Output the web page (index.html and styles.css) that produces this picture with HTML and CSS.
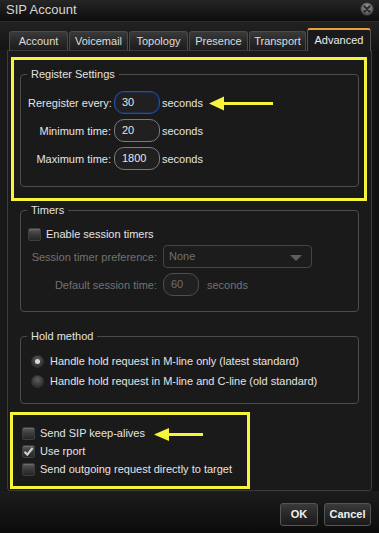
FILE: index.html
```html
<!DOCTYPE html>
<html>
<head>
<meta charset="utf-8">
<link rel="stylesheet" href="styles.css">
</head>
<body>
<div class="window">
  <div class="titlebar">
    <span class="title">SIP Account</span>
    <svg class="close" width="14" height="14" viewBox="0 0 14 14">
      <defs>
        <radialGradient id="cg" cx="50%" cy="35%" r="65%">
          <stop offset="0" stop-color="#9a9a9a"/>
          <stop offset="1" stop-color="#4a4a4a"/>
        </radialGradient>
      </defs>
      <circle cx="7" cy="7" r="6.5" fill="url(#cg)" stroke="#2a2a2a" stroke-width="0.8"/>
      <path d="M4.3 4.3 L9.7 9.7 M9.7 4.3 L4.3 9.7" stroke="#2b2b2b" stroke-width="2" stroke-linecap="round"/>
    </svg>
  </div>
  <div class="tabbar">
    <div class="tab">Account</div>
    <div class="tab">Voicemail</div>
    <div class="tab">Topology</div>
    <div class="tab">Presence</div>
    <div class="tab tab-narrow">Transport</div>
    <div class="tab tab-active">Advanced</div>
  </div>
  <div class="panel">
    <div class="hl hl-top">
      <fieldset class="group group-inset">
        <legend>Register Settings</legend>
        <div class="reg-grid">
          <span class="lbl">Reregister every:</span>
          <span class="field field-focus">30</span>
          <span class="unit">seconds</span>
          <span class="lbl">Minimum time:</span>
          <span class="field">20</span>
          <span class="unit">seconds</span>
          <span class="lbl">Maximum time:</span>
          <span class="field">1800</span>
          <span class="unit">seconds</span>
        </div>
      </fieldset>
    </div>

    <fieldset class="group group-timers">
      <legend>Timers</legend>
      <div class="timers-body">
        <div class="check-row"><span class="cb"></span><span>Enable session timers</span></div>
        <div class="timer-grid">
          <span class="lbl dim">Session timer preference:</span>
          <span class="select">None<span class="caret"></span></span>
          <span class="lbl dim">Default session time:</span>
          <span class="tline"><span class="field field-dim">60</span><span class="unit dim unit-wide">seconds</span></span>
        </div>
      </div>
    </fieldset>

    <fieldset class="group group-hold">
      <legend>Hold method</legend>
      <div class="hold-body">
        <div class="radio-row"><span class="rb rb-on"></span><span>Handle hold request in M-line only (latest standard)</span></div>
        <div class="radio-row"><span class="rb"></span><span>Handle hold request in M-line and C-line (old standard)</span></div>
      </div>
    </fieldset>

    <div class="hl hl-bottom">
      <div class="check-row"><span class="cb"></span><span>Send SIP keep-alives</span></div>
      <div class="check-row"><span class="cb cb-on"><svg width="13" height="13" viewBox="0 0 13 13"><path d="M2.5 6.8 L5.3 9.6 L10.6 3" fill="none" stroke="#cfcfcf" stroke-width="2.2"/></svg></span><span>Use rport</span></div>
      <div class="check-row"><span class="cb"></span><span>Send outgoing request directly to target</span></div>
    </div>
  </div>
  <div class="footer">
    <span class="btn btn-ok">OK</span>
    <span class="btn btn-cancel">Cancel</span>
  </div>
  <svg class="annot" width="379" height="533" viewBox="0 0 379 533">
    <polygon points="209,103.5 224,96.5 224,110.5" fill="#f6f53c"/>
    <rect x="222" y="102" width="51" height="3" fill="#f6f53c"/>
    <polygon points="154,434.5 169,428 169,441" fill="#f6f53c"/>
    <rect x="167" y="433" width="36" height="3" fill="#f6f53c"/>
  </svg>
</div>
</body>
</html>
```
FILE: styles.css
```css
* { box-sizing: border-box; }
html, body { margin: 0; padding: 0; background: #121212; }
body { font-family: "Liberation Sans", Arial, sans-serif; font-size: 11px; color: #e4e4e4; }

.window {
  position: relative;
  width: 379px;
  height: 533px;
  overflow: hidden;
  display: flex;
  flex-direction: column;
  background: linear-gradient(to right, #181818, #161616 95%, #111 100%);
}

.titlebar {
  height: 22px;
  flex: none;
  display: flex;
  align-items: center;
  justify-content: space-between;
  padding: 0 5px 2px 6px;
  background: linear-gradient(#262626, #161616 60%, #0d0d0d);
  border-bottom: 1px solid #2c2c2c;
}
.title { font-size: 13px; color: #d6d6d6; line-height: 16px; }
.close { display: block; margin-top: -1px; }

.tabbar {
  height: 28px;
  flex: none;
  display: flex;
  align-items: flex-end;
  padding-left: 9px;
  background: linear-gradient(#222, #141414);
  position: relative;
  z-index: 2;
}
.tab {
  width: 59px;
  height: 19px;
  margin-right: 1px;
  border: 1px solid #4a4a4a;
  border-bottom: none;
  border-radius: 3px 3px 0 0;
  background: linear-gradient(#3a3a3a, #262626 60%, #1d1d1d);
  color: #dcdcdc;
  text-align: center;
  line-height: 18px;
  flex: none;
}
.tab-narrow { width: 57px; }
.tab-active {
  width: 64px;
  height: 23px;
  margin-bottom: -1px;
  border-top: 2px solid #e9a33c;
  border-color: #e9a33c #555 #555 #555;
  background: #1a1a1b;
  color: #ececec;
  line-height: 20px;
}

.panel {
  flex: none;
  margin-left: 7px;
  width: 365px;
  height: 441px;
  border: 1px solid #3c3c3c;
  border-radius: 0 0 3px 3px;
  background: #1a1a1b;
  display: flex;
  flex-direction: column;
  align-items: flex-start;
}

.hl {
  border: 3px solid #f6f53c;
  flex: none;
}
.hl-top {
  margin: 6px 0 0 3px;
  width: 356px;
  padding: 8px 5px 11px 6px;
}
.hl-bottom {
  margin: 8px 0 0 2px;
  width: 240px;
  padding: 10px 0 9px 9px;
  display: flex;
  flex-direction: column;
  gap: 2px;
}

fieldset.group {
  margin: 0;
  padding: 0;
  min-inline-size: 0;
  border: 1px solid #4c4c4c;
  border-radius: 4px;
  width: 339px;
}
fieldset.group legend {
  margin-left: 6px;
  padding: 0 4px;
  line-height: 13px;
  color: #e2e2e2;
}
.group-inset { width: 339px; }
.group-timers { margin: 3px 0 0 12px !important; }
.group-hold { margin: 18px 0 0 12px !important; }

.reg-grid {
  display: grid;
  grid-template-columns: 83px 46px auto;
  column-gap: 3px;
  row-gap: 5px;
  align-items: center;
  padding: 10px 0 16px 7px;
}
.lbl { text-align: right; white-space: nowrap; }
.dim { color: #727272; }
.unit { margin-left: -1px; }
.unit-wide { margin-left: 8px; }

.field {
  height: 23px;
  border: 1px solid #7a7a7a;
  border-radius: 10px;
  background: #202021;
  padding-left: 7px;
  line-height: 21px;
  color: #e6e6e6;
}
.field-focus { border-color: #1f4fae; box-shadow: inset 0 0 0 0.5px #163a80; }
.field-dim { border-color: #4e4e4e; color: #6e6e6e; width: 36px; display: inline-block; }

.timers-body { padding: 9px 0 15px 7px; }
.timer-grid {
  display: grid;
  grid-template-columns: 129px 149px;
  column-gap: 6px;
  row-gap: 5px;
  align-items: center;
  margin-top: 3px;
}
.select {
  position: relative;
  height: 23px;
  border: 1px solid #454545;
  border-radius: 4px;
  background: #1c1c1d;
  color: #707070;
  padding-left: 5px;
  line-height: 21px;
}
.caret {
  position: absolute;
  right: 9px;
  top: 9px;
  width: 0;
  height: 0;
  border-left: 6px solid transparent;
  border-right: 6px solid transparent;
  border-top: 6px solid #5e5e5e;
}
.tline { display: flex; align-items: center; }

.check-row {
  height: 16px;
  display: flex;
  align-items: center;
  gap: 5px;
  white-space: nowrap;
}
.cb {
  width: 13px;
  height: 13px;
  flex: none;
  border: 1px solid #3e3e3e;
  border-radius: 2px;
  background: linear-gradient(#5a5a5a, #3a3a3a 50%, #262626);
  box-shadow: inset 0 1px 0 rgba(255,255,255,0.12);
  position: relative;
}
.cb-on svg { position: absolute; left: -1px; top: -1px; }

.hold-body {
  padding: 10px 0 14px 10px;
  display: flex;
  flex-direction: column;
  gap: 4px;
}
.radio-row {
  height: 16px;
  display: flex;
  align-items: center;
  gap: 6px;
  white-space: nowrap;
}
.rb {
  width: 13px;
  height: 13px;
  flex: none;
  border-radius: 50%;
  border: 1px solid #333;
  background: radial-gradient(circle at 50% 35%, #5e5e5e, #333 70%, #262626);
  position: relative;
}
.rb-on::after {
  content: "";
  position: absolute;
  left: 3px;
  top: 3px;
  width: 5px;
  height: 5px;
  border-radius: 50%;
  background: #d8d8d8;
}

.footer {
  flex: 1;
  display: flex;
  justify-content: flex-end;
  align-items: flex-start;
  gap: 6px;
  padding: 12px 8px 0 0;
  background: linear-gradient(#1c1c1c, #121212 60%, #0c0c0c);
}
.btn {
  height: 23px;
  border: 1px solid #555;
  border-radius: 3px;
  background: linear-gradient(#3a3a3a, #262626 55%, #1b1b1b);
  color: #f0f0f0;
  font-weight: bold;
  text-align: center;
  line-height: 21px;
}
.btn-ok { width: 38px; }
.btn-cancel { width: 47px; }

.annot { position: absolute; left: 0; top: 0; pointer-events: none; }
```
